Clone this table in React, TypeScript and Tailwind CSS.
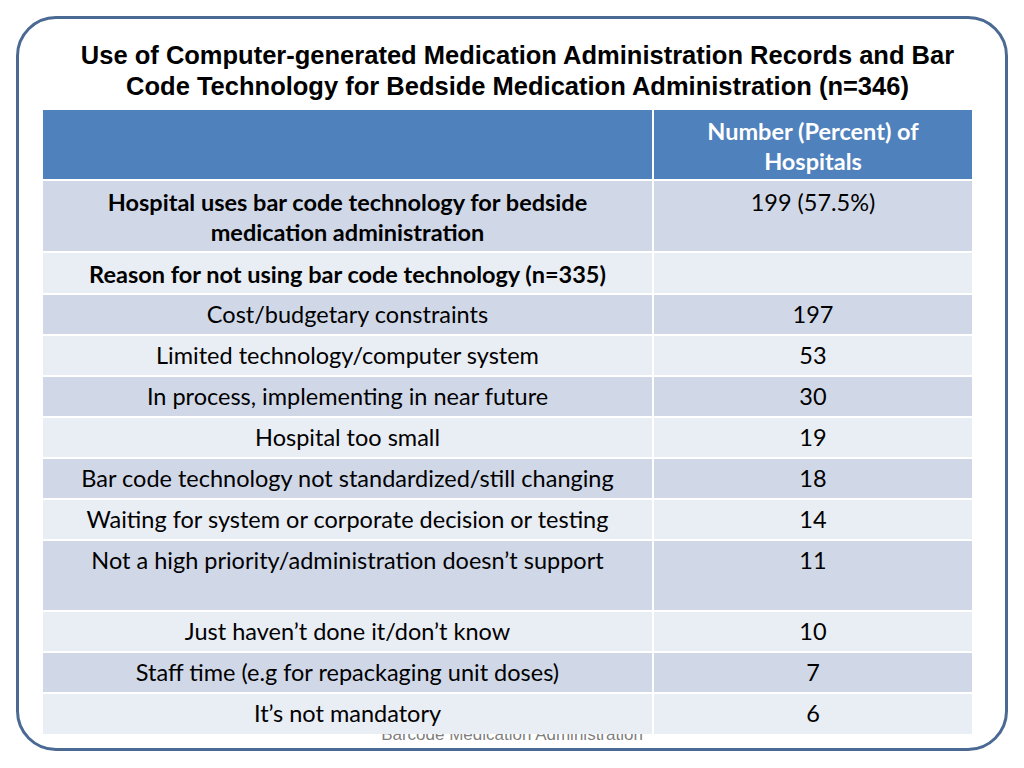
const rows: { left: string; right: string; bold?: boolean; h: string }[] = [
  { left: "Hospital uses bar code technology for bedside medication administration", right: "199 (57.5%)", bold: true, h: "h-[70px]" },
  { left: "Reason for not using bar code technology (n=335)", right: "", bold: true, h: "h-[40px]" },
  { left: "Cost/budgetary constraints", right: "197", h: "h-[39px]" },
  { left: "Limited technology/computer system", right: "53", h: "h-[39px]" },
  { left: "In process, implementing in near future", right: "30", h: "h-[39px]" },
  { left: "Hospital too small", right: "19", h: "h-[39px]" },
  { left: "Bar code technology not standardized/still changing", right: "18", h: "h-[39px]" },
  { left: "Waiting for system or corporate decision or testing", right: "14", h: "h-[39px]" },
  { left: "Not a high priority/administration doesn\u2019t support", right: "11", h: "h-[69px]" },
  { left: "Just haven\u2019t done it/don\u2019t know", right: "10", h: "h-[39px]" },
  { left: "Staff time (e.g  for repackaging unit doses)", right: "7", h: "h-[39px]" },
  { left: "It\u2019s not mandatory", right: "6", h: "h-[40px]" },
];

export default function App() {
  return (
    <div className="w-[1024px] h-[768px] bg-white p-[16px] pb-[16px]">
      <div className="h-[735px] rounded-[40px] border-[3px] border-[#4a6a94] flex flex-col items-center pt-[21px]">
        <h1 className="ml-[11px] text-center font-['Liberation_Sans',Arial,sans-serif] font-bold text-[25.5px] leading-[31px] text-black w-[900px]">
          Use of Computer-generated Medication Administration Records and Bar Code Technology for Bedside Medication Administration (n=346)
        </h1>
        <div className="relative z-10 mt-[8px] mr-[9px] w-[929px] flex flex-col gap-[2px] font-['Lato','Open_Sans',sans-serif] text-[23.5px] leading-[30px] text-black">
          <div className="grid grid-cols-[609px_318px] gap-[2px] h-[69px]">
            <div className="bg-[#4f81bd]" />
            <div className="bg-[#4f81bd] text-white font-bold text-center pt-[6px]">
              Number (Percent) of
              <br />
              Hospitals
            </div>
          </div>
          {rows.map((r, i) => (
            <div key={i} className={`grid grid-cols-[609px_318px] gap-[2px] ${r.h}`}>
              <div className={`${i % 2 === 0 ? "bg-[#d0d8e8]" : "bg-[#e9edf4]"} text-center ${r.bold ? "font-bold px-[40px] pt-[6px]" : "px-[8px] pt-[4px]"}`}>
                {r.left}
              </div>
              <div className={`${i % 2 === 0 ? "bg-[#d0d8e8]" : "bg-[#e9edf4]"} text-center ${r.bold ? "pt-[6px]" : "pt-[4px]"}`}>
                {r.right}
              </div>
            </div>
          ))}
        </div>
        <div className="-mt-[9px] font-['Liberation_Sans',Arial,sans-serif] text-[17px] leading-[20px] text-[#7f7f7f]">
          Barcode Medication Administration
        </div>
      </div>
    </div>
  );
}
